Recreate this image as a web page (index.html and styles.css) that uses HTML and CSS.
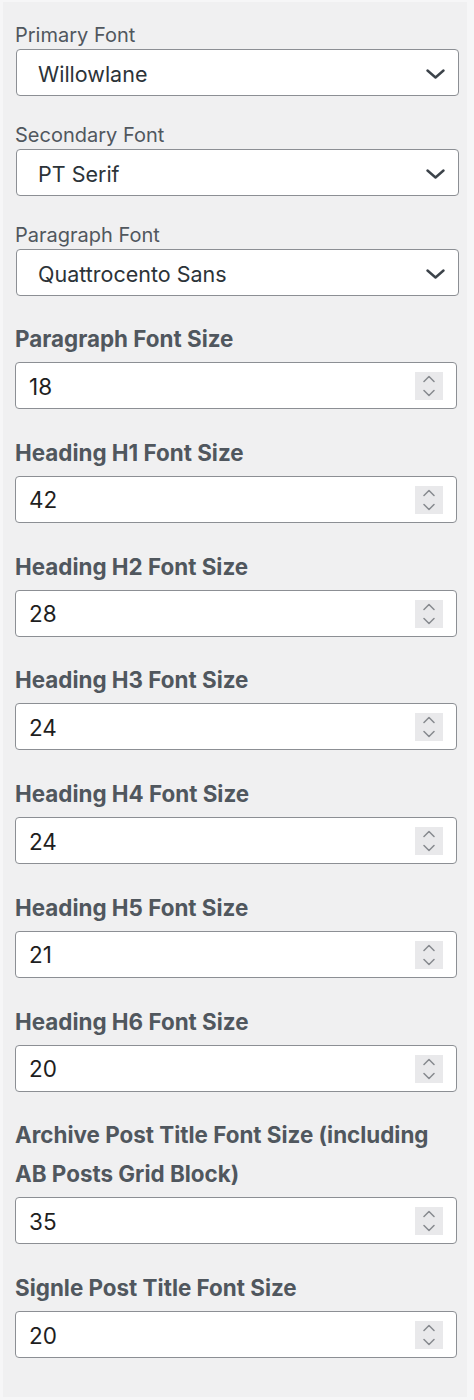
FILE: index.html
```html
<!DOCTYPE html>
<html>
<head>
<meta charset="utf-8">
<link rel="stylesheet" href="styles.css">
</head>
<body>
<div class="panel">
  <div class="sel-group">
    <div class="sel-label">Primary Font</div>
    <div class="select"><span class="sel-value">Willowlane</span><svg class="chev" width="19" height="10" viewBox="0 0 19 10"><polyline points="1.5,1.5 9.5,8.5 17.5,1.5" fill="none" stroke="#3c434a" stroke-width="2.4" stroke-linecap="round" stroke-linejoin="round"/></svg></div>
  </div>
  <div class="sel-group">
    <div class="sel-label">Secondary Font</div>
    <div class="select"><span class="sel-value">PT Serif</span><svg class="chev" width="19" height="10" viewBox="0 0 19 10"><polyline points="1.5,1.5 9.5,8.5 17.5,1.5" fill="none" stroke="#3c434a" stroke-width="2.4" stroke-linecap="round" stroke-linejoin="round"/></svg></div>
  </div>
  <div class="sel-group last">
    <div class="sel-label">Paragraph Font</div>
    <div class="select"><span class="sel-value">Quattrocento Sans</span><svg class="chev" width="19" height="10" viewBox="0 0 19 10"><polyline points="1.5,1.5 9.5,8.5 17.5,1.5" fill="none" stroke="#3c434a" stroke-width="2.4" stroke-linecap="round" stroke-linejoin="round"/></svg></div>
  </div>

  <div class="num-group">
    <div class="num-label">Paragraph Font Size</div>
    <div class="number"><span class="num-value">18</span><span class="spin"><svg width="12" height="22" viewBox="0 0 12 22"><polyline points="1,6.5 6,1.5 11,6.5" fill="none" stroke="#878a8f" stroke-width="1.5" stroke-linecap="round" stroke-linejoin="round"/><polyline points="1,15.5 6,20.5 11,15.5" fill="none" stroke="#878a8f" stroke-width="1.5" stroke-linecap="round" stroke-linejoin="round"/></svg></span></div>
  </div>
  <div class="num-group">
    <div class="num-label">Heading H1 Font Size</div>
    <div class="number"><span class="num-value">42</span><span class="spin"><svg width="12" height="22" viewBox="0 0 12 22"><polyline points="1,6.5 6,1.5 11,6.5" fill="none" stroke="#878a8f" stroke-width="1.5" stroke-linecap="round" stroke-linejoin="round"/><polyline points="1,15.5 6,20.5 11,15.5" fill="none" stroke="#878a8f" stroke-width="1.5" stroke-linecap="round" stroke-linejoin="round"/></svg></span></div>
  </div>
  <div class="num-group">
    <div class="num-label">Heading H2 Font Size</div>
    <div class="number"><span class="num-value">28</span><span class="spin"><svg width="12" height="22" viewBox="0 0 12 22"><polyline points="1,6.5 6,1.5 11,6.5" fill="none" stroke="#878a8f" stroke-width="1.5" stroke-linecap="round" stroke-linejoin="round"/><polyline points="1,15.5 6,20.5 11,15.5" fill="none" stroke="#878a8f" stroke-width="1.5" stroke-linecap="round" stroke-linejoin="round"/></svg></span></div>
  </div>
  <div class="num-group">
    <div class="num-label">Heading H3 Font Size</div>
    <div class="number"><span class="num-value">24</span><span class="spin"><svg width="12" height="22" viewBox="0 0 12 22"><polyline points="1,6.5 6,1.5 11,6.5" fill="none" stroke="#878a8f" stroke-width="1.5" stroke-linecap="round" stroke-linejoin="round"/><polyline points="1,15.5 6,20.5 11,15.5" fill="none" stroke="#878a8f" stroke-width="1.5" stroke-linecap="round" stroke-linejoin="round"/></svg></span></div>
  </div>
  <div class="num-group">
    <div class="num-label">Heading H4 Font Size</div>
    <div class="number"><span class="num-value">24</span><span class="spin"><svg width="12" height="22" viewBox="0 0 12 22"><polyline points="1,6.5 6,1.5 11,6.5" fill="none" stroke="#878a8f" stroke-width="1.5" stroke-linecap="round" stroke-linejoin="round"/><polyline points="1,15.5 6,20.5 11,15.5" fill="none" stroke="#878a8f" stroke-width="1.5" stroke-linecap="round" stroke-linejoin="round"/></svg></span></div>
  </div>
  <div class="num-group">
    <div class="num-label">Heading H5 Font Size</div>
    <div class="number"><span class="num-value">21</span><span class="spin"><svg width="12" height="22" viewBox="0 0 12 22"><polyline points="1,6.5 6,1.5 11,6.5" fill="none" stroke="#878a8f" stroke-width="1.5" stroke-linecap="round" stroke-linejoin="round"/><polyline points="1,15.5 6,20.5 11,15.5" fill="none" stroke="#878a8f" stroke-width="1.5" stroke-linecap="round" stroke-linejoin="round"/></svg></span></div>
  </div>
  <div class="num-group">
    <div class="num-label">Heading H6 Font Size</div>
    <div class="number"><span class="num-value">20</span><span class="spin"><svg width="12" height="22" viewBox="0 0 12 22"><polyline points="1,6.5 6,1.5 11,6.5" fill="none" stroke="#878a8f" stroke-width="1.5" stroke-linecap="round" stroke-linejoin="round"/><polyline points="1,15.5 6,20.5 11,15.5" fill="none" stroke="#878a8f" stroke-width="1.5" stroke-linecap="round" stroke-linejoin="round"/></svg></span></div>
  </div>
  <div class="num-group">
    <div class="num-label">Archive Post Title Font Size (including AB Posts Grid Block)</div>
    <div class="number"><span class="num-value">35</span><span class="spin"><svg width="12" height="22" viewBox="0 0 12 22"><polyline points="1,6.5 6,1.5 11,6.5" fill="none" stroke="#878a8f" stroke-width="1.5" stroke-linecap="round" stroke-linejoin="round"/><polyline points="1,15.5 6,20.5 11,15.5" fill="none" stroke="#878a8f" stroke-width="1.5" stroke-linecap="round" stroke-linejoin="round"/></svg></span></div>
  </div>
  <div class="num-group">
    <div class="num-label">Signle Post Title Font Size</div>
    <div class="number"><span class="num-value">20</span><span class="spin"><svg width="12" height="22" viewBox="0 0 12 22"><polyline points="1,6.5 6,1.5 11,6.5" fill="none" stroke="#878a8f" stroke-width="1.5" stroke-linecap="round" stroke-linejoin="round"/><polyline points="1,15.5 6,20.5 11,15.5" fill="none" stroke="#878a8f" stroke-width="1.5" stroke-linecap="round" stroke-linejoin="round"/></svg></span></div>
  </div>
</div>
</body>
</html>
```

FILE: styles.css
```css
html, body {
  margin: 0;
  padding: 0;
  background: #f6f6f7;
}
body {
  font-family: Inter, "Liberation Sans", sans-serif;
  width: 474px;
  height: 1400px;
  box-sizing: border-box;
  padding: 2px 7px 3px 3px;
}
.panel {
  background: #f0f0f1;
  height: 100%;
  box-sizing: border-box;
  padding: 22px 0 0 12px;
}
.sel-group {
  margin-bottom: 28px;
}
.sel-group.last {
  margin-bottom: 23px;
}
.sel-label {
  font-size: 20px;
  line-height: 22px;
  color: #50575e;
  margin-bottom: 3px;
}
.select {
  margin-left: 1px;
  width: 443px;
  height: 47px;
  box-sizing: border-box;
  border: 1px solid #8c8f94;
  border-radius: 4px;
  background: #fff;
  display: flex;
  align-items: center;
  justify-content: space-between;
  padding: 2px 13px 0 21px;
}
.sel-value {
  font-size: 21.5px;
  color: #2c3338;
}
.chev {
  display: block;
}
.num-group {
  margin-bottom: 23.75px;
}
.num-label {
  font-size: 22.4px;
  font-weight: 700;
  line-height: 39px;
  color: #50575e;
  margin-bottom: 4px;
  width: 440px;
}
.number {
  width: 442px;
  height: 47px;
  box-sizing: border-box;
  border: 1px solid #8c8f94;
  border-radius: 4px;
  background: #fff;
  display: flex;
  align-items: center;
  justify-content: space-between;
  padding: 1px 13px 0 13px;
}
.num-value {
  font-size: 22.5px;
  color: #1e1e1e;
}
.spin {
  width: 28px;
  height: 28px;
  background: #e9e9eb;
  display: flex;
  align-items: center;
  justify-content: center;
}
.spin svg {
  display: block;
}
```
